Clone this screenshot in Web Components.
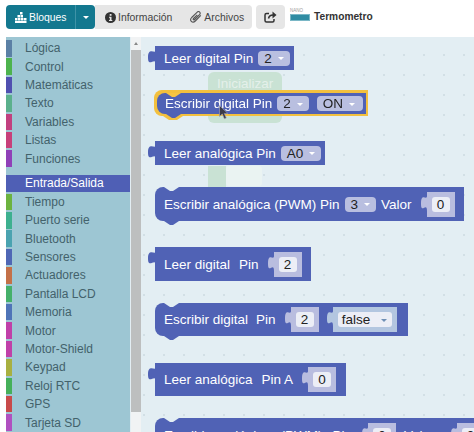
<!DOCTYPE html>
<html lang="es">
    <head>
        <meta charset="UTF-8">
        <meta name="viewport" content="width=device-width, initial-scale=1.0">
        <title>Bloques - Termometro</title>
        <style>
            html, body { margin: 0; height: 100%; overflow: hidden; background: #fff; }
            body { font-family: "Liberation Sans", Arial, sans-serif; }
        </style>
    </head>
    <body>
        <app-shell>
            <app-toolbar slot="top"></app-toolbar>
            <side-menu slot="side">
                <menu-item color="#5b80a5">Lógica</menu-item>
                <menu-item color="#4db34d">Control</menu-item>
                <menu-item color="#5050b0">Matemáticas</menu-item>
                <menu-item color="#5bb08c">Texto</menu-item>
                <menu-item color="#c2407f">Variables</menu-item>
                <menu-item color="#c8407a">Listas</menu-item>
                <menu-item color="#9040b8" class="last">Funciones</menu-item>
                <menu-item color="#4f5fb5" selected>Entrada/Salida</menu-item>
                <menu-item color="#6cb33f">Tiempo</menu-item>
                <menu-item color="#3db08f">Puerto serie</menu-item>
                <menu-item color="#4aa3b0">Bluetooth</menu-item>
                <menu-item color="#4f67b5">Sensores</menu-item>
                <menu-item color="#c47048">Actuadores</menu-item>
                <menu-item color="#45b06a">Pantalla LCD</menu-item>
                <menu-item color="#4f74b8">Memoria</menu-item>
                <menu-item color="#c040a8">Motor</menu-item>
                <menu-item color="#c040a8">Motor-Shield</menu-item>
                <menu-item color="#a8b040">Keypad</menu-item>
                <menu-item color="#45b05a">Reloj RTC</menu-item>
                <menu-item color="#c84a4a">GPS</menu-item>
                <menu-item color="#b050c0">Tarjeta SD</menu-item>
            </side-menu>
            <block-canvas slot="main">
                <ghost-block></ghost-block>

                <code-block x="25" y="9" tab h="24"><span>Leer digital Pin</span><drop-field>2</drop-field></code-block>
                <code-block x="27" y="56" stmt selected h="21" gap="5"><span>Escribir digital Pin</span><drop-field>2</drop-field><drop-field style="margin-left: 3px; padding: 0 8px 0 6px">ON</drop-field></code-block>
                <code-block x="25" y="104" tab h="24"><span>Leer analógica Pin</span><drop-field>A0</drop-field></code-block>
                <code-block x="25" y="150" stmt h="34" pr="9"><span>Escribir analógica (PWM) Pin</span><drop-field>3</drop-field><span>Valor</span><value-socket style="margin-left: 4px">0</value-socket></code-block>
                <code-block x="25" y="210" tab h="34" gap="9" pr="9"><span>Leer digital</span><span>Pin</span><value-socket>2</value-socket></code-block>
                <code-block x="25" y="266" stmt h="33" gap="8" pr="11"><span>Escribir digital</span><span>Pin</span><value-socket style="margin-left: 1px">2</value-socket><value-socket kind="list">false</value-socket></code-block>
                <code-block x="25" y="326" tab h="33" gap="9" pr="10"><span>Leer analógica</span><span>Pin A</span><value-socket>0</value-socket></code-block>
                <code-block x="25" y="381" stmt h="34" gap="10" pr="9"><span>Escribir analógica</span><span>(PWM)</span><span>Pin</span><value-socket>0</value-socket><span style="margin-left: -2px">Valor</span><value-socket style="margin-left: 6px">0</value-socket></code-block>

                <mouse-pointer></mouse-pointer>
            </block-canvas>
        </app-shell>

        <script>
            const tabPath = "M8 0c0 5-8-4-8 7.500s8-2.500 8 7.500z";

            class AppShell extends HTMLElement {
                constructor() {
                    super();
                    this.attachShadow({ mode: "open" });
                    this.shadowRoot.innerHTML = /* html */ `
                        <style>
                            :host { display: grid; grid-template-rows: 37px 395px; height: 432px; overflow: hidden; }
                            .main { display: grid; grid-template-columns: 124px 1fr; padding-left: 6px; min-height: 0; }
                        </style>
                        <slot name="top"></slot>
                        <div class="main">
                            <slot name="side"></slot>
                            <slot name="main"></slot>
                        </div>
                    `;
                }
            }

            class AppToolbar extends HTMLElement {
                constructor() {
                    super();
                    this.attachShadow({ mode: "open" });
                    this.shadowRoot.innerHTML = /* html */ `
                        <style>
                            :host { display: flex; align-items: flex-start; padding: 5px 0 0 6px; font-size: 10.4px; color: #444; }
                            .split { display: flex; height: 24px; background: #13788f; border-radius: 4px; color: #fff; }
                            .split div { display: flex; align-items: center; }
                            .main { width: 69px; gap: 2px; padding-left: 9px; box-sizing: border-box; }
                            .caret { width: 19px; justify-content: center; border-left: 1px solid #3f93a7; }
                            .caret i { border: 3px solid transparent; border-top: 3.500px solid #fff; border-bottom: 0; }
                            .group { display: flex; align-items: center; width: 157px; height: 24px; background: #e6e6e6; border-radius: 0 4px 4px 0; }
                            .group span { display: flex; align-items: center; gap: 2px; }
                            .share { display: flex; align-items: center; justify-content: center; width: 29px; height: 24px; margin-left: 4px; background: #e6e6e6; border-radius: 4px; }
                            .board { display: flex; flex-direction: column; width: 20px; margin: 3px 4px 0 5px; color: #999; font-size: 4.500px; line-height: 6px; }
                            .board i { display: block; height: 7px; background: #2f8ca3; border: 1px solid #7ab7c6; box-sizing: border-box; }
                            .name { margin-top: 5px; font-weight: bold; color: #333; font-size: 10.2px; line-height: 14px; }
                        </style>
                        <div class="split">
                            <div class="main">
                                <svg width="12" height="11" viewBox="0 0 12 11" fill="#fff">
                                    <rect x="5" y="0" width="2.500" height="2.500"/>
                                    <rect x="2.500" y="3" width="2.500" height="2.500"/><rect x="5.500" y="3" width="2.500" height="2.500"/>
                                    <rect x="0" y="6" width="2.500" height="2.500"/><rect x="3" y="6" width="2.500" height="2.500"/><rect x="6" y="6" width="2.500" height="2.500"/><rect x="9" y="6" width="2.500" height="2.500"/>
                                    <rect x="0" y="9" width="11.500" height="2"/>
                                </svg>
                                Bloques
                            </div>
                            <div class="caret"><i></i></div>
                        </div>
                        <div class="group">
                            <span style="margin-left: 10px">
                                <svg width="11" height="11" viewBox="0 0 11 11"><circle cx="5.500" cy="5.500" r="5.500" fill="#333"/><rect x="4.700" y="2" width="1.800" height="1.800" fill="#e6e6e6"/><path d="M4 4.700h2.500v3.300h.8v1h-3.300v-1h.8v-2.300h-.8z" fill="#e6e6e6"/></svg>
                                Información
                            </span>
                            <span style="margin-left: 18px">
                                <svg width="12" height="12" viewBox="0 0 12 12" fill="none" stroke="#555" stroke-width="1.100"><path d="M10.800 4.300 5.300 10c-1.200 1.200-3 1.300-4 .3s-.7-2.600.4-3.800L7 1.300c.8-.8 2-.9 2.700-.2s.5 1.800-.2 2.600L4.600 8.500c-.4.400-1 .5-1.300.2s-.2-.8.200-1.200L7.300 3.800"/></svg>
                                Archivos
                            </span>
                        </div>
                        <div class="share">
                            <svg width="13" height="12" viewBox="0 0 13 12" fill="none" stroke="#333" stroke-width="1.500"><path d="M5 2.500H2.500A1.500 1.500 0 0 0 1 4v5.500A1.500 1.500 0 0 0 2.500 11h6A1.500 1.500 0 0 0 10 9.500V8"/><path d="M4.500 7.500c.5-2.500 2.200-3.500 4.500-3.500" /><path d="M8.500 .5 12.500 4 8.500 7.500z" fill="#333" stroke="none"/></svg>
                        </div>
                        <div class="board"><span>NANO</span><i></i></div>
                        <div class="name">Termometro</div>
                    `;
                }
            }

            class SideMenu extends HTMLElement {
                constructor() {
                    super();
                    this.attachShadow({ mode: "open" });
                    this.shadowRoot.innerHTML = /* html */ `
                        <style>
                            :host { display: flex; flex-direction: column; gap: 1.900px; padding-top: 3px; background: #9dc6d3; overflow: hidden; }
                            ::slotted(.last) { margin-bottom: 6.500px; }
                        </style>
                        <slot></slot>
                    `;
                }
            }

            class MenuItem extends HTMLElement {
                constructor() {
                    super();
                    this.attachShadow({ mode: "open" });
                    const color = this.getAttribute("color");
                    const selected = this.hasAttribute("selected");
                    this.shadowRoot.innerHTML = /* html */ `
                        <style>
                            :host { display: flex; flex: none; height: 16.500px; align-items: center; font-size: 12px; color: ${selected ? "#fff" : "#43626b"}; background: ${selected ? color : "none"}; }
                            i { flex: none; width: 6px; height: 100%; background: ${color}; margin-right: 13px; }
                        </style>
                        <i></i><slot></slot>
                    `;
                }
            }

            class BlockCanvas extends HTMLElement {
                constructor() {
                    super();
                    this.attachShadow({ mode: "open" });
                    this.shadowRoot.innerHTML = /* html */ `
                        <style>
                            :host { display: block; position: relative; overflow: hidden; height: 395px; background-color: #e3eef3; background-image: radial-gradient(#d2dfe5 0.800px, transparent 1px); background-size: 20px 20px; background-position: 4px 8px; }
                            .track { position: absolute; left: 1px; top: 0; width: 10px; height: 100%; background: #f1f3f4; }
                            .thumb { position: absolute; left: 0; top: 13px; width: 10px; height: 362px; background: #bdbfbf; }
                            .arrow { position: absolute; left: 2.500px; top: 5px; border: 2.500px solid transparent; border-bottom: 3px solid #888; border-top: 0; }
                        </style>
                        <div class="track"><div class="arrow"></div><div class="thumb"></div></div>
                        <slot></slot>
                    `;
                }
            }

            class GhostBlock extends HTMLElement {
                constructor() {
                    super();
                    this.attachShadow({ mode: "open" });
                    this.shadowRoot.innerHTML = /* html */ `
                        <style>
                            :host { position: absolute; left: 78px; top: 35px; width: 74px; height: 118px; font-size: 13.500px; color: #e4f0ea; }
                            .top { height: 51px; padding: 3px 0 0 9px; box-sizing: border-box; line-height: 18px; background: #c9e2d4; border-radius: 6px; }
                            .stem { width: 18px; height: 24px; margin-top: 43px; background: #c9e2d4; }
                            .arm { position: absolute; left: 18px; top: 94px; width: 36px; height: 20px; background: #eaf3f2; border-radius: 3px; }
                        </style>
                        <div class="top">Inicializar</div>
                        <div class="stem"></div>
                        <div class="arm"></div>
                    `;
                }
            }

            class CodeBlock extends HTMLElement {
                constructor() {
                    super();
                    this.attachShadow({ mode: "open" });
                    const x = this.getAttribute("x");
                    const y = this.getAttribute("y");
                    const h = this.getAttribute("h");
                    const gap = this.getAttribute("gap") || "5";
                    const pr = this.getAttribute("pr") || (this.hasAttribute("selected") ? "3" : "4");
                    const stmt = this.hasAttribute("stmt");
                    const selected = this.hasAttribute("selected");
                    const notch = selected ? "#f6c443" : "#e3eef3";
                    const yellow = "#f3c03e";
                    this.shadowRoot.innerHTML = /* html */ `
                        <style>
                            :host { position: absolute; left: ${x}px; top: ${y}px; display: block; font-size: 13.500px; color: #fff; white-space: nowrap;
                                ${selected ? `filter: drop-shadow(2.500px 0 0 ${yellow}) drop-shadow(-2.500px 0 0 ${yellow}) drop-shadow(0 2.500px 0 ${yellow}) drop-shadow(0 -2.500px 0 ${yellow});` : ""} }
                            .body { display: flex; align-items: center; gap: ${gap}px; height: ${h}px; box-sizing: border-box; padding: 0 ${pr}px 0 ${selected ? 8 : 9}px; background: #5062b5; border-radius: ${stmt ? "8px 0 0 8px" : "0"}; }
                            svg { position: absolute; display: block; }
                            .tab { left: -7px; top: 4px; }
                            .notch { left: 9px; top: 0; }
                            .bump { left: 9px; top: ${h}px; }
                        </style>
                        ${this.hasAttribute("tab") ? `<svg class="tab" width="8" height="15" viewBox="0 0 8 15"><path d="${tabPath}" fill="#5062b5"/></svg>` : ""}
                        <div class="body"><slot></slot></div>
                        ${stmt ? `<svg class="notch" width="15" height="4" viewBox="0 0 15 4"><path d="M0 0l6 4h3l6-4z" fill="${notch}"/></svg>
                        <svg class="bump" width="15" height="4" viewBox="0 0 15 4"><path d="M0 0l6 4h3l6-4z" fill="#5062b5"/></svg>` : ""}
                    `;
                }
            }

            class DropField extends HTMLElement {
                constructor() {
                    super();
                    this.attachShadow({ mode: "open" });
                    this.shadowRoot.innerHTML = /* html */ `
                        <style>
                            :host { display: inline-flex; align-items: center; gap: 6px; height: 15px; padding: 0 6px; background: #b9bfe0; border-radius: 4px; color: #222; font-size: 13.500px; }
                            i { border: 3px solid transparent; border-top: 3.500px solid #fff; border-bottom: 0; margin-top: 1px; }
                        </style>
                        <slot></slot><i></i>
                    `;
                }
            }

            class ValueSocket extends HTMLElement {
                constructor() {
                    super();
                    this.attachShadow({ mode: "open" });
                    const list = this.getAttribute("kind") === "list";
                    const color = list ? "#b3c6e0" : "#b9bddf";
                    this.shadowRoot.innerHTML = /* html */ `
                        <style>
                            :host { display: flex; align-items: flex-start; flex: none; color: #222; font-size: 13.500px; }
                            svg { display: block; flex: none; margin-top: 4px; }
                            .box { display: flex; padding: 5px; background: ${color}; }
                            .field { display: flex; align-items: center; justify-content: center; gap: 11px; width: ${list ? 54 : 18}px; box-sizing: border-box; height: 15px; background: #eceef6; border-radius: 3px; }
                            i { border: 3px solid transparent; border-top: 3.500px solid #6f8fb5; border-bottom: 0; margin-top: 1px; }
                        </style>
                        <svg width="6" height="15" viewBox="0 0 8 15" preserveAspectRatio="none"><path d="${tabPath}" fill="${color}"/></svg>
                        <div class="box"><div class="field"><slot></slot>${list ? "<i></i>" : ""}</div></div>
                    `;
                }
            }

            class MousePointer extends HTMLElement {
                constructor() {
                    super();
                    this.attachShadow({ mode: "open" });
                    this.shadowRoot.innerHTML = /* html */ `
                        <style>
                            :host { position: absolute; left: 89px; top: 68px; display: block; width: 10px; height: 15px; }
                        </style>
                        <svg width="10" height="15" viewBox="0 0 10 15"><path d="M.5.5v11l2.800-2.500 2 4.800 2-.9-2-4.500h3.500z" fill="#3b3b48" stroke="#aab" stroke-width=".6"/></svg>
                    `;
                }
            }

            // Registrar los componentes
            customElements.define("app-shell", AppShell);
            customElements.define("app-toolbar", AppToolbar);
            customElements.define("side-menu", SideMenu);
            customElements.define("menu-item", MenuItem);
            customElements.define("block-canvas", BlockCanvas);
            customElements.define("ghost-block", GhostBlock);
            customElements.define("code-block", CodeBlock);
            customElements.define("drop-field", DropField);
            customElements.define("value-socket", ValueSocket);
            customElements.define("mouse-pointer", MousePointer);
        </script>
    </body>
</html>
